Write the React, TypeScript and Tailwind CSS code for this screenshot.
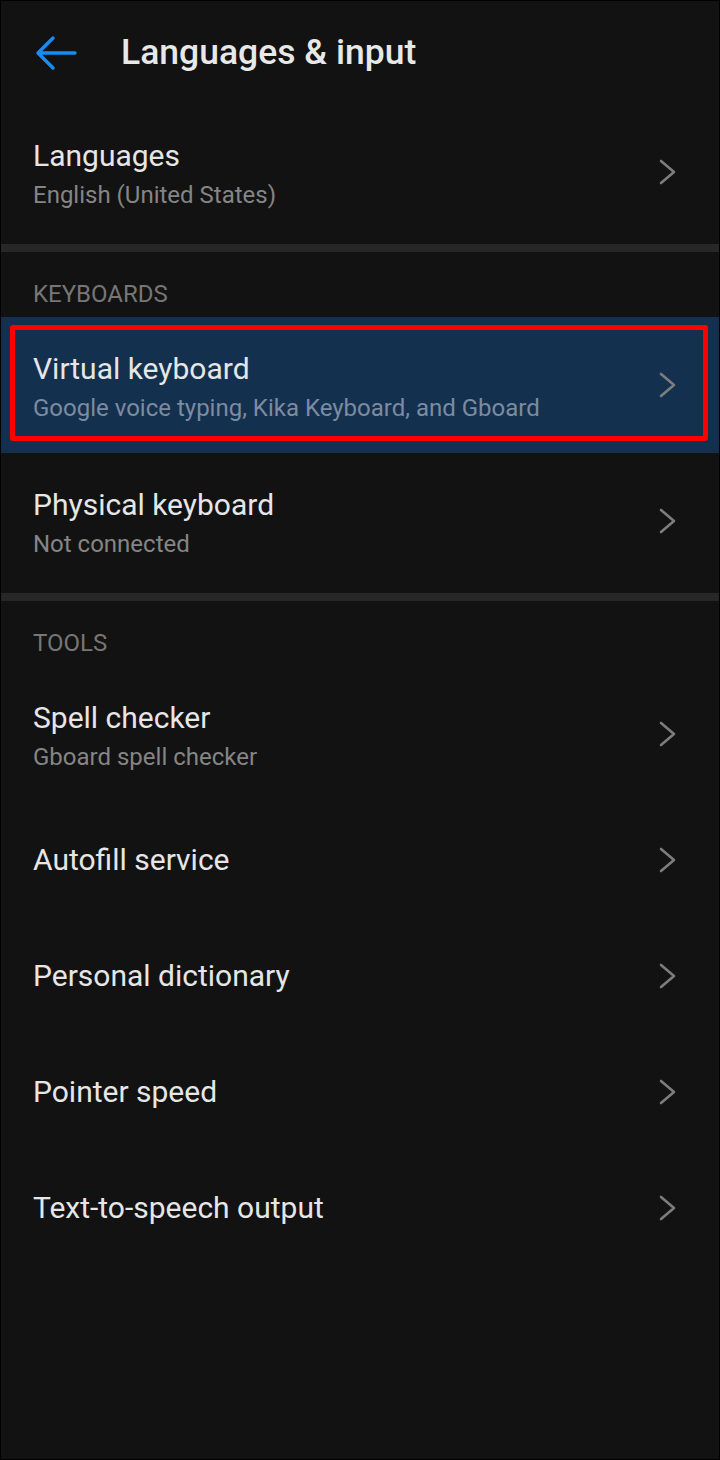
import React from 'react';

const font = { fontFamily: 'Roboto, "Noto Sans", sans-serif' };

const Chevron = () => (
  <svg width="18" height="26" viewBox="0 0 18 26" className="shrink-0">
    <path d="M2 2 L15 13 L2 24" fill="none" stroke="#7d7d7d" strokeWidth="2.6" strokeLinecap="round" strokeLinejoin="round" />
  </svg>
);

type RowProps = { title: string; subtitle?: string; highlighted?: boolean };

const Row = ({ title, subtitle, highlighted }: RowProps) => (
  <div
    className={`relative flex items-center justify-between pl-[32px] pr-[42px] ${subtitle ? 'h-[136px]' : 'h-[116px]'} ${highlighted ? 'bg-[#14304f]' : ''}`}
  >
    <div className={`flex flex-col ${subtitle ? 'mt-[6px]' : ''}`}>
      <span className="text-[30px] leading-[40px] text-[#e6e6e6]">{title}</span>
      {subtitle && (
        <span className={`text-[24px] leading-[38px] ${highlighted ? 'text-[#7c8ba0]' : 'text-[#858585]'}`}>{subtitle}</span>
      )}
    </div>
    <Chevron />
    {highlighted && (
      <div className="absolute left-[9px] right-[11px] top-[8px] bottom-[12px] border-[5px] border-[#ff0000] rounded-[3px]" />
    )}
  </div>
);

const SectionHeader = ({ label }: { label: string }) => (
  <div className="h-[65px] flex items-end pl-[32px] pb-[5px]">
    <span className="text-[24px] leading-[36px] text-[#767676]">{label}</span>
  </div>
);

const Divider = () => <div className="h-[8px] bg-[#272727] mt-[4px]" />;

export default function App() {
  return (
    <div style={font} className="w-[720px] h-[1460px] bg-[#121212] border border-black overflow-hidden">
      {/* Toolbar */}
      <div className="h-[103px] flex items-center">
        <svg width="44" height="36" viewBox="0 0 44 36" className="ml-[34px]">
          <path d="M4 18 H40 M18 3 L3 18 L18 33" fill="none" stroke="#1a8cf0" strokeWidth="3.4" strokeLinecap="round" strokeLinejoin="round" />
        </svg>
        <h1 className="ml-[42px] text-[35.5px] font-medium text-[#e8e8e8]">Languages &amp; input</h1>
      </div>

      <Row title="Languages" subtitle="English (United States)" />
      <Divider />

      <SectionHeader label="KEYBOARDS" />
      <Row title="Virtual keyboard" subtitle="Google voice typing, Kika Keyboard, and Gboard" highlighted />
      <Row title="Physical keyboard" subtitle="Not connected" />
      <Divider />

      <SectionHeader label="TOOLS" />
      <Row title="Spell checker" subtitle="Gboard spell checker" />
      <Row title="Autofill service" />
      <Row title="Personal dictionary" />
      <Row title="Pointer speed" />
      <Row title="Text-to-speech output" />
    </div>
  );
}
